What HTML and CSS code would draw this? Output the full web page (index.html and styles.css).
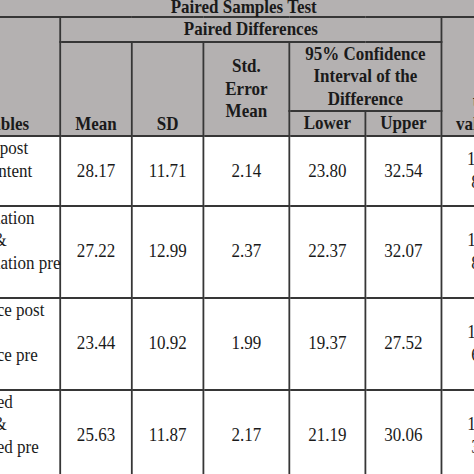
FILE: index.html
```html
<!DOCTYPE html>
<html lang="en">
<head>
<meta charset="UTF-8">
<title>Paired Samples Test</title>
<link rel="stylesheet" href="styles.css">
</head>
<body>

<table class="stats">
    <colgroup>
        <col class="c-var">
        <col class="c-num">
        <col class="c-num">
        <col class="c-se">
        <col class="c-ci">
        <col class="c-ci">
        <col class="c-t">
        <col class="c-df">
        <col class="c-sig">
    </colgroup>
    <thead>
        <tr class="row-title">
            <th colspan="9">Paired Samples Test</th>
        </tr>
        <tr class="row-group">
            <th rowspan="3" class="var bottom">Variables</th>
            <th colspan="5">Paired Differences</th>
            <th rowspan="3" class="bottom">t<br>value</th>
            <th rowspan="3" class="bottom">df</th>
            <th rowspan="3" class="bottom">Sig.</th>
        </tr>
        <tr class="row-sub">
            <th rowspan="2" class="bottom">Mean</th>
            <th rowspan="2" class="bottom">SD</th>
            <th rowspan="2">Std.<br>Error<br>Mean</th>
            <th colspan="2">95% Confidence<br>Interval of the<br>Difference</th>
        </tr>
        <tr class="row-ci">
            <th>Lower</th>
            <th>Upper</th>
        </tr>
    </thead>
    <tbody>
        <tr>
            <td class="var">Total post<br>&amp; Content<br>pre</td>
            <td>28.17</td>
            <td>11.71</td>
            <td>2.14</td>
            <td>23.80</td>
            <td>32.54</td>
            <td>13<br>8</td>
            <td>29</td>
            <td>.000</td>
        </tr>
        <tr>
            <td class="var">Evaluation<br>post &amp;<br>Evaluation pre<br>score</td>
            <td>27.22</td>
            <td>12.99</td>
            <td>2.37</td>
            <td>22.37</td>
            <td>32.07</td>
            <td>11<br>8</td>
            <td>29</td>
            <td>.000</td>
        </tr>
        <tr>
            <td class="var">Service post<br>&amp;<br>Service pre<br>score</td>
            <td>23.44</td>
            <td>10.92</td>
            <td>1.99</td>
            <td>19.37</td>
            <td>27.52</td>
            <td>11<br>6</td>
            <td>29</td>
            <td>.000</td>
        </tr>
        <tr>
            <td class="var">Related<br>post &amp;<br>Related pre<br>score</td>
            <td>25.63</td>
            <td>11.87</td>
            <td>2.17</td>
            <td>21.19</td>
            <td>30.06</td>
            <td>11<br>3</td>
            <td>29</td>
            <td>.000</td>
        </tr>
    </tbody>
</table>

</body>
</html>
```

FILE: styles.css
```css
body {
    margin: 0;
    background-color: #fff;
    overflow: hidden;
}
/* the source table is a little narrower than it is tall, so the
   whole table is squeezed on the x axis */
.stats {
    font-family: "Liberation Serif", "Times New Roman", serif;
    font-size: 19px;
    line-height: 22.5px;
    color: #1a1a1a;
    border-collapse: collapse;
    table-layout: fixed;
    width: 766px;
    margin-top: -6px;
    margin-left: -100px;
    transform: scaleX(0.895);
    transform-origin: left top;
}
.c-var { width: 178px; }
.c-num { width: 80px; }
.c-se { width: 96px; }
.c-ci { width: 85px; }
.c-t { width: 76px; }
.c-df { width: 41px; }
.c-sig { width: 45px; }
.stats th,
.stats td {
    border: 2px solid #363636;
    padding: 0;
    text-align: center;
    vertical-align: middle;
}
.stats th {
    background-color: #b4b1b1;
    font-weight: bold;
}
.stats th.bottom {
    vertical-align: bottom;
}
.stats .var {
    text-align: left;
    padding-left: 66px;
    white-space: nowrap;
}
.row-title th {
    border-top: none;
    height: 22px;
    line-height: 19px;
    vertical-align: bottom;
}
.row-group th { height: 22px; }
.row-sub th { height: 64px; }
.row-ci th { height: 23px; }
.stats td {
    background-color: #fff;
    font-weight: normal;
}
```
